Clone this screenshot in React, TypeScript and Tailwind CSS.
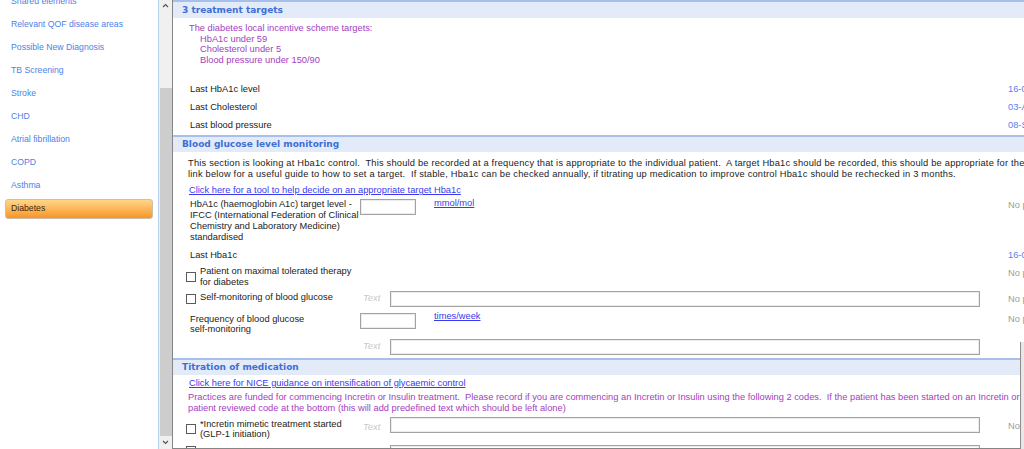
import React from 'react';

const navItems = [
  'Shared elements',
  'Relevant QOF disease areas',
  'Possible New Diagnosis',
  'TB Screening',
  'Stroke',
  'CHD',
  'Atrial fibrillation',
  'COPD',
  'Asthma',
  'Diabetes',
];

function SectionHeader({ title }: { title: string }) {
  return (
    <div className="h-[17px] border-t-2 border-[#a7bfeb] bg-[#e3eaf8] pl-[9px] flex items-center">
      <span className="pt-[1px] font-['DejaVu_Sans',sans-serif] font-bold text-[9px] text-[#3d6fd6] whitespace-nowrap">
        {title}
      </span>
    </div>
  );
}

function Checkbox() {
  return <div className="w-[10px] h-[10px] shrink-0 border border-[#5a5a5a] bg-white" />;
}

function TextField() {
  return (
    <div className="w-[590px] h-[16px] border border-[#a3a3a3] bg-white shadow-[inset_0_0_0_1px_#ececec]" />
  );
}

function SmallField() {
  return (
    <div className="w-[56px] h-[16px] border border-[#a3a3a3] bg-white shadow-[inset_0_0_0_1px_#ececec]" />
  );
}

function TextHint() {
  return <span className="w-[30px] pl-[3px] italic text-[#c9c9c9] text-[9.3px]">Text</span>;
}

function NoValue({ text = 'No p', className = '' }: { text?: string; className?: string }) {
  return <div className={`leading-[11px] text-[#9c9c9c] whitespace-nowrap ${className}`}>{text}</div>;
}

export default function App() {
  return (
    <div className="relative w-[1024px] h-[449px] overflow-hidden bg-white flex font-['Liberation_Sans',Arial,sans-serif] text-[9.3px] text-[#222]">
      {/* left navigation */}
      <div className="w-[159px] shrink-0 h-full overflow-hidden border-r border-[#b9d1f1]">
        <div className="-mt-[8px] flex flex-col">
          {navItems.map((item) => {
            const active = item === 'Diabetes';
            return (
              <div
                key={item}
                className={
                  active
                    ? 'h-[20px] mb-[3px] mx-[5px] px-[5px] flex items-center rounded-[3px] border border-[#cbbfae] bg-gradient-to-b from-[#ffd685] to-[#f7951e] text-[#3b2a10]'
                    : 'h-[20px] mb-[3px] mx-[5px] px-[5px] flex items-center border border-transparent text-[#4d82e8]'
                }
              >
                <span className="text-[8.7px] whitespace-nowrap">{item}</span>
              </div>
            );
          })}
        </div>
      </div>

      {/* scrollbar */}
      <div className="w-[13px] shrink-0 h-full flex flex-col bg-[#f0f0f0]">
        <div className="h-[88px] flex justify-center pt-[3px]">
          <svg width="7" height="5" viewBox="0 0 7 5">
            <path d="M1 4 L3.5 1.5 L6 4" fill="none" stroke="#555" strokeWidth="1.2" />
          </svg>
        </div>
        <div className="flex-1 ml-[1px] bg-[#cdcdcd]" />
        <div className="h-[13px] flex justify-center items-center">
          <svg width="7" height="5" viewBox="0 0 7 5">
            <path d="M1 1 L3.5 3.5 L6 1" fill="none" stroke="#555" strokeWidth="1.2" />
          </svg>
        </div>
      </div>

      {/* main content */}
      <div className="flex-1 h-full overflow-hidden border-l border-b border-[#858585]">
        <div className="w-[900px]">
          {/* section 1 */}
          <div className="h-[18px] border-t-2 border-[#a7bfeb] bg-[#e3eaf8] pl-[9px] flex items-center">
            <span className="pt-[1px] font-['DejaVu_Sans',sans-serif] font-bold text-[9px] text-[#3d6fd6] whitespace-nowrap">
              3 treatment targets
            </span>
          </div>
          <div className="mt-[5px] pl-[16px] leading-[10.5px] text-[#a53dc0]">
            <div>The diabetes local incentive scheme targets:</div>
            <div className="pl-[11px]">HbA1c under 59</div>
            <div className="pl-[11px]">Cholesterol under 5</div>
            <div className="pl-[11px]">Blood pressure under 150/90</div>
          </div>
          <div className="mt-[16px]">
            {[
              ['Last HbA1c level', '16-06-2015'],
              ['Last Cholesterol', '03-Apr-2015'],
              ['Last blood pressure', '08-Sep-2015'],
            ].map(([label, date]) => (
              <div key={label} className="h-[18px] flex items-center">
                <div className="w-[835px] pl-[17px]">{label}</div>
                <div className="text-[#5b80ec] whitespace-nowrap">{date}</div>
              </div>
            ))}
          </div>

          {/* section 2 */}
          <SectionHeader title="Blood glucose level monitoring" />
          <div className="mt-[6px] pl-[15px] leading-[11px] whitespace-pre tracking-[0.2px]">
            <div>
              This section is looking at Hba1c control.  This should be recorded at a frequency that is appropriate to the individual patient.  A target Hba1c should be recorded, this should be appropriate for the individual patient.  Click the
            </div>
            <div>
              link below for a useful guide to how to set a target.  If stable, Hba1c can be checked annually, if titrating up medication to improve control Hba1c should be rechecked in 3 months.
            </div>
          </div>
          <div className="mt-[5px] pl-[16px] leading-[11px]">
            <span className="text-[#3a3af0] underline">Click here for a tool to help decide on an appropriate target Hba1c</span>
          </div>

          <div className="mt-[1px] flex items-start">
            <div className="w-[187px] pl-[17px] pt-[2px] leading-[11px]">
              HbA1c (haemoglobin A1c) target level -<br />
              IFCC (International Federation of Clinical<br />
              Chemistry and Laboratory Medicine)<br />
              standardised
            </div>
            <div className="w-[648px] pt-[2px] flex items-start">
              <SmallField />
              <span className="ml-[18px] -mt-[1px] leading-[11px] text-[#3a3af0] underline">mmol/mol</span>
            </div>
            <NoValue className="pt-[3px]" />
          </div>

          <div className="mt-[7px] flex leading-[11px]">
            <div className="w-[835px] pl-[17px]">Last Hba1c</div>
            <div className="text-[#5b80ec] whitespace-nowrap">16-06-2015</div>
          </div>

          <div className="mt-[5px] flex items-start">
            <div className="w-[187px] pl-[13px] flex items-center gap-[4px]">
              <Checkbox />
              <div className="leading-[10.5px]">
                Patient on maximal tolerated therapy
                <br />
                for diabetes
              </div>
            </div>
            <div className="w-[648px]" />
            <NoValue className="pt-[1.5px]" />
          </div>

          <div className="mt-[3.5px] h-[16px] flex items-center">
            <div className="w-[187px] pl-[13px] flex items-center gap-[4px]">
              <Checkbox />
              <div className="leading-[11px] -mt-[2px]">Self-monitoring of blood glucose</div>
            </div>
            <div className="w-[648px] flex items-center">
              <TextHint />
              <TextField />
            </div>
            <NoValue className="pt-[1px]" />
          </div>

          <div className="mt-[6px] flex items-start">
            <div className="w-[187px] pl-[17px] pt-[1px] leading-[10.5px]">
              Frequency of blood glucose
              <br />
              self-monitoring
            </div>
            <div className="w-[648px] flex items-start">
              <SmallField />
              <span className="ml-[18px] -mt-[2px] leading-[11px] text-[#3a3af0] underline">times/week</span>
            </div>
            <NoValue className="pt-[1.5px]" />
          </div>

          <div className="mt-[4px] flex items-center">
            <div className="w-[187px]" />
            <div className="w-[648px] flex items-center">
              <TextHint />
              <TextField />
            </div>
          </div>

          {/* section 3 */}
          <div className="mt-[3px]">
            <SectionHeader title="Titration of medication" />
          </div>
          <div className="mt-[3px] pl-[16px] leading-[11px]">
            <span className="text-[#3a3af0] underline">Click here for NICE guidance on intensification of glycaemic control</span>
          </div>
          <div className="mt-[3px] pl-[15px] leading-[11px] text-[#a53dc0] whitespace-pre">
            <div>
              Practices are funded for commencing Incretin or Insulin treatment.  Please record if you are commencing an Incretin or Insulin using the following 2 codes.  If the patient has been started on an Incretin or Insulin
            </div>
            <div>patient reviewed code at the bottom (this will add predefined text which should be left alone)</div>
          </div>

          <div className="mt-[3px] flex items-stretch">
            <div className="w-[187px] pl-[13px] pt-[2px] flex items-center gap-[4px]">
              <Checkbox />
              <div className="leading-[10.5px]">
                *Incretin mimetic treatment started
                <br />
                (GLP-1 initiation)
              </div>
            </div>
            <div className="w-[648px] flex items-center">
              <TextHint />
              <div className="self-start">
                <TextField />
              </div>
            </div>
            <NoValue text="No" className="pt-[4px]" />
          </div>

          <div className="mt-[5px] flex items-start">
            <div className="w-[187px] pl-[13px] flex items-start gap-[4px]">
              <div className="mt-[1px]">
                <Checkbox />
              </div>
              <div className="leading-[10.5px] pt-[2px]">*Insulin treatment initiated</div>
            </div>
            <div className="w-[648px] flex items-start">
              <span className="w-[30px]" />
              <TextField />
            </div>
          </div>
        </div>
      </div>

      {/* overlapping panel edge */}
      <div className="absolute left-[1020px] top-[342px] bottom-0 w-[4px] border-l border-[#8c8c8c] bg-[#ece6e6]" />
    </div>
  );
}
